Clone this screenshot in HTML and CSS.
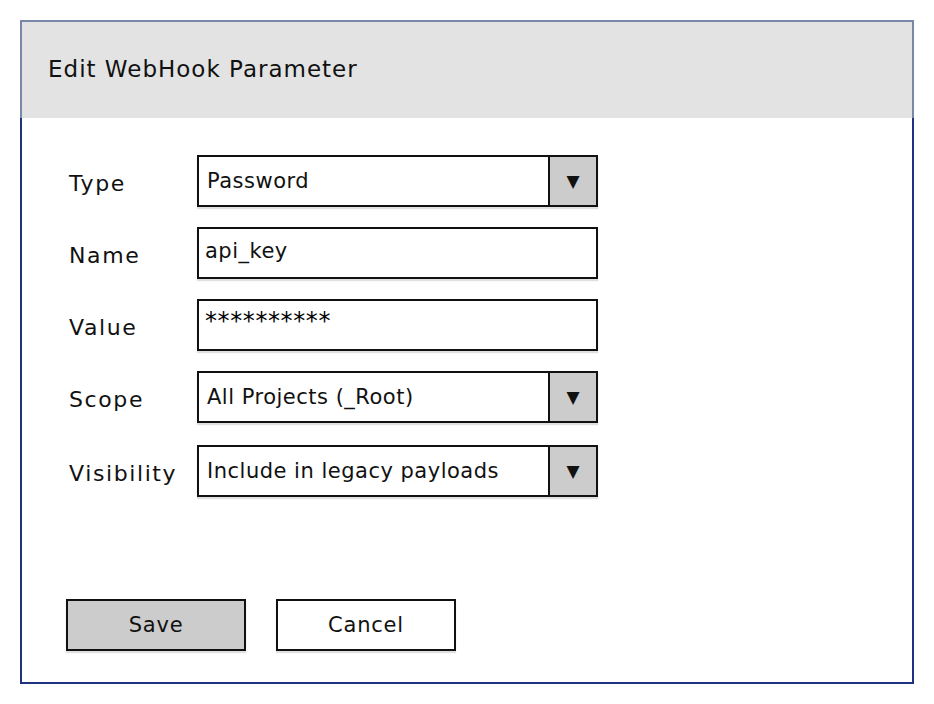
FILE: index.html
```html
<!DOCTYPE html>
<html>
<head>
<meta charset="utf-8">
<link rel="stylesheet" href="styles.css">
</head>
<body>
<div class="dialog">
  <div class="header"><span class="title">Edit WebHook Parameter</span></div>
  <div class="body">
    <div class="form">
      <div class="label">Type</div>
      <div class="field select"><span class="value">Password</span><span class="arrow">▼</span></div>
      <div class="label">Name</div>
      <div class="field input"><span class="value">api_key</span></div>
      <div class="label">Value</div>
      <div class="field input top"><span class="value stars">**********</span></div>
      <div class="label">Scope</div>
      <div class="field select"><span class="value">All Projects (_Root)</span><span class="arrow">▼</span></div>
      <div class="label last">Visibility</div>
      <div class="field select last"><span class="value">Include in legacy payloads</span><span class="arrow">▼</span></div>
    </div>
    <div class="buttons">
      <div class="btn primary">Save</div>
      <div class="btn">Cancel</div>
    </div>
  </div>
</div>
</body>
</html>
```
FILE: styles.css
```css
html, body {
  margin: 0;
  padding: 0;
  background: #ffffff;
}
body {
  font-family: "DejaVu Sans", "Noto Sans", sans-serif;
  color: #111;
}
.dialog {
  margin: 20px 0 0 20px;
  width: 894px;
  height: 664px;
  box-sizing: border-box;
  display: flex;
  flex-direction: column;
}
.header {
  height: 98px;
  box-sizing: border-box;
  background: #e3e3e3;
  border: 2px solid #7b87a9;
  border-bottom: none;
  display: flex;
  align-items: center;
  padding-left: 26px;
  padding-bottom: 2px;
}
.title {
  font-size: 23px;
  letter-spacing: 1px;
}
.body {
  flex: 1;
  border: 2px solid #1e3282;
  border-top: none;
  padding: 37px 0 0 47px;
}
.form {
  display: grid;
  grid-template-columns: 128px 401px;
  grid-auto-rows: 52px;
  row-gap: 20px;
  align-items: center;
}
.label {
  font-size: 22px;
  letter-spacing: 1.6px;
  padding-top: 5px;
}
.label.last, .field.last {
  margin-top: 4px;
}
.field {
  height: 52px;
  box-sizing: border-box;
  border: 2px solid #111;
  background: #fff;
  display: flex;
  align-items: center;
  font-size: 21px;
  letter-spacing: 0.5px;
  box-shadow: 0 2px 1px rgba(0,0,0,0.12);
}
.field .value {
  flex: 1;
  padding-left: 8px;
}
.field.input .value {
  padding-left: 6px;
  padding-bottom: 4px;
}
.field.top {
  align-items: flex-start;
}
.field.top .value {
  padding-top: 6px;
}
.value.stars {
  font-size: 24px;
  letter-spacing: 0.6px;
  color: #000;
}
.arrow {
  width: 48px;
  height: 100%;
  box-sizing: border-box;
  background: #cccccc;
  border-left: 2px solid #111;
  display: flex;
  align-items: center;
  justify-content: center;
  font-size: 17px;
  letter-spacing: 0;
}
.buttons {
  display: flex;
  gap: 30px;
  margin-top: 104px;
  margin-left: -3px;
}
.btn {
  width: 180px;
  height: 52px;
  box-sizing: border-box;
  border: 2px solid #111;
  background: #fff;
  display: flex;
  align-items: center;
  justify-content: center;
  font-size: 21px;
  letter-spacing: 0.8px;
  box-shadow: 0 2px 1px rgba(0,0,0,0.12);
}
.btn.primary {
  background: #cccccc;
}
```
